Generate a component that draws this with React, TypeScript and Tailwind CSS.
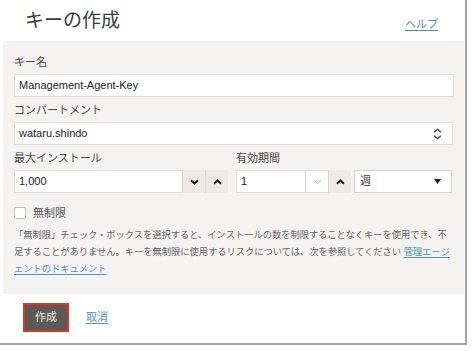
import React from "react";

const font = {
  fontFamily: '"Liberation Sans", "Noto Sans CJK JP", sans-serif',
};

function Chevron({ dir, light }: { dir: "up" | "down"; light?: boolean }) {
  return (
    <svg width="9" height="6" viewBox="0 0 9 6" fill="none">
      <path
        d={dir === "down" ? "M1 1.2 L4.5 4.6 L8 1.2" : "M1 4.8 L4.5 1.4 L8 4.8"}
        stroke={light ? "#c4c4c4" : "#222"}
        strokeWidth={light ? 1.1 : 2}
      />
    </svg>
  );
}

function Label({ children }: { children: React.ReactNode }) {
  return <div className="mt-[5px] mb-[4px] h-[16px] text-[11px] leading-[16px] text-[#4a4a4a]">{children}</div>;
}

function NumberField({ value, width, downDisabled }: { value: string; width: string; downDisabled?: boolean }) {
  return (
    <div className="flex h-[23px]">
      <div className={`${width} bg-white border border-[#dedede] border-r-0 pl-[4px] text-[11px] leading-[21px] text-[#222]`}>
        {value}
      </div>
      <div
        className={`w-[23px] flex items-center justify-center border-l border-[#d6d6d6] ${
          downDisabled ? "bg-white border-y border-y-[#dedede]" : "bg-[#ecebea]"
        }`}
      >
        <Chevron dir="down" light={downDisabled} />
      </div>
      <div className="w-[23px] flex items-center justify-center bg-[#ecebea] border-l border-[#d6d6d6]">
        <Chevron dir="up" />
      </div>
    </div>
  );
}

export default function App() {
  return (
    <div className="w-[474px] h-[351px] bg-white" style={font}>
      <div className="w-[467px] h-[345px] bg-white border-r-[2px] border-b-[2px] border-[#a3a3a3] flex flex-col">
        {/* Header */}
        <div className="h-[41px] flex items-start justify-between pl-[25px] pr-[27px]">
          <div className="mt-[9px] text-[19px] leading-[24px] text-[#3a3a3a]">キーの作成</div>
          <a className="mt-[17px] text-[11px] leading-[14px] text-[#4a93bd] underline underline-offset-2">ヘルプ</a>
        </div>

        {/* Body */}
        <div className="ml-[3px] mr-[1px] h-[253px] bg-[#f4f3f2] px-[11px] pt-[8px]">
          <Label>キー名</Label>
          <div className="h-[23px] w-[440px] bg-white border border-[#dedede] pl-[4px] text-[11px] leading-[21px] text-[#222]">
            Management-Agent-Key
          </div>

          <Label>コンパートメント</Label>
          <div className="h-[23px] w-[439px] bg-white border border-[#dedede] pl-[4px] pr-[10px] flex items-center justify-between text-[11px] text-[#222]">
            <span>wataru.shindo</span>
            <svg width="9" height="12" viewBox="0 0 9 12" fill="none">
              <path d="M1.2 4.3 L4.5 1.3 L7.8 4.3 M1.2 7.7 L4.5 10.7 L7.8 7.7" stroke="#333" strokeWidth="1.2" />
            </svg>
          </div>

          <div className="flex">
            <div className="w-[222px]">
              <Label>最大インストール</Label>
              <NumberField value="1,000" width="w-[168px]" />
            </div>
            <div>
              <Label>有効期間</Label>
              <div className="flex">
                <NumberField value="1" width="w-[69px]" downDisabled />
                <div className="ml-[3px] w-[98px] h-[23px] bg-white border border-[#d4d4d4] pl-[5px] pr-[10px] flex items-center justify-between text-[11px] text-[#333]">
                  <span>週</span>
                  <svg width="7" height="5" viewBox="0 0 7 5">
                    <path d="M0 0 H7 L3.5 5 Z" fill="#222" />
                  </svg>
                </div>
              </div>
            </div>
          </div>

          <div className="mt-[14px] flex items-center h-[12px]">
            <div className="w-[12px] h-[12px] bg-white border border-[#bdbdbd] rounded-[2px]" />
            <span className="ml-[7px] text-[11px] text-[#555]">無制限</span>
          </div>

          <div className="mt-[8px] w-[440px] text-[9.3px] leading-[17px] text-[#666] tracking-[-0.05px]">
            <div>「無制限」チェック・ボックスを選択すると、インストールの数を制限することなくキーを使用でき、不</div>
            <div>
              足することがありません。キーを無制限に使用するリスクについては、次を参照してください{" "}
              <a className="text-[#4a93bd] underline underline-offset-2">管理エージ</a>
            </div>
            <div>
              <a className="text-[#4a93bd] underline underline-offset-2">ェントのドキュメント</a>
            </div>
          </div>
        </div>

        {/* Footer */}
        <div className="flex-1 flex items-center pl-[23px] pb-[2px]">
          <button className="w-[46px] h-[29px] border-[2px] border-[#e5321a] bg-[#5d5956] text-[11px] text-[#e8e8e8]">
            作成
          </button>
          <a className="ml-[17px] text-[11px] text-[#4a93bd] underline underline-offset-2">取消</a>
        </div>
      </div>
    </div>
  );
}
